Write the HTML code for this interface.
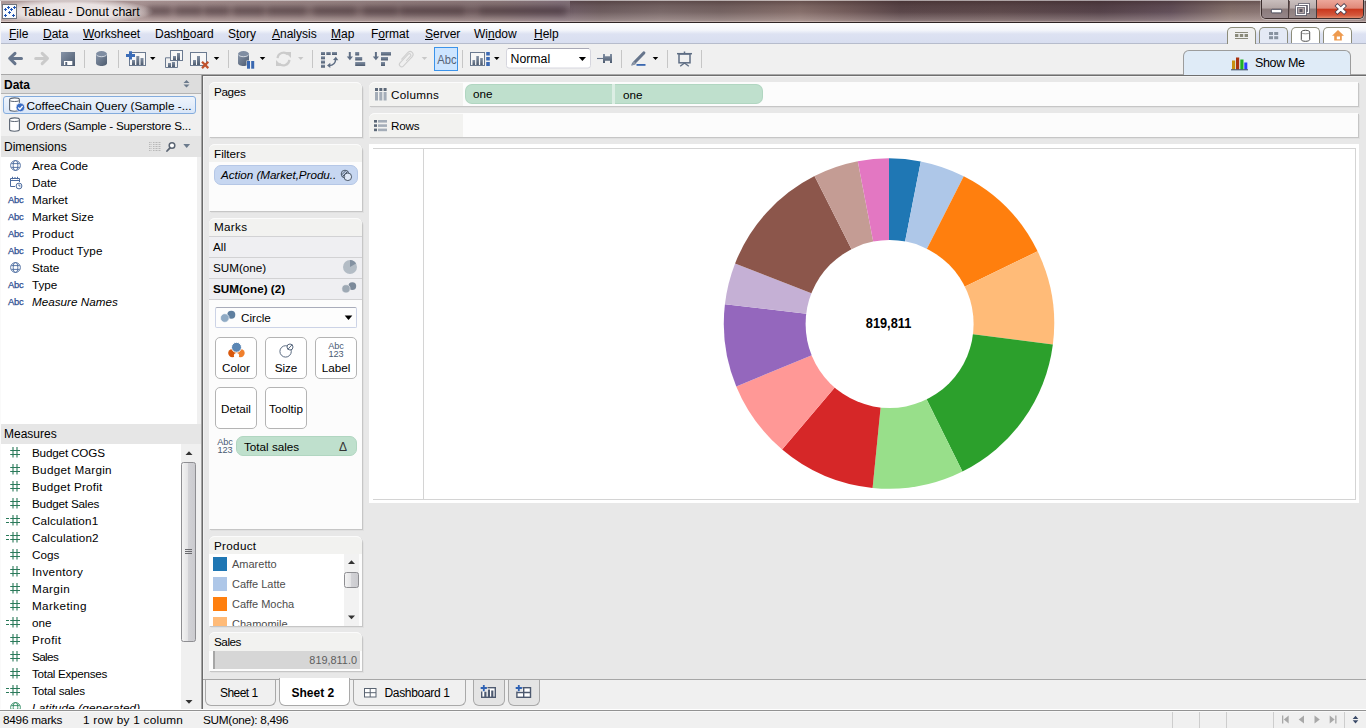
<!DOCTYPE html>
<html><head><meta charset="utf-8"><title>Tableau - Donut chart</title>
<style>
*{box-sizing:border-box;margin:0;padding:0}
html,body{width:1366px;height:728px;overflow:hidden;background:#e8e8e8}
body{font-family:"Liberation Sans",sans-serif;font-size:12px;color:#000;position:relative}
.a{position:absolute}
.t{position:absolute;white-space:nowrap;line-height:16px;height:16px}
u{text-decoration:underline;text-underline-offset:1px}
/* title */
#title{left:0;top:0;width:1366px;height:23px;background:#6e5a5a}
#menubar{left:0;top:23px;width:1366px;height:21px;background:linear-gradient(#fff 0,#f4f6fb 35%,#dde2f2 55%,#d8def0 100%);border-bottom:1px solid #b6bccc}
#toolbar{left:0;top:44px;width:1366px;height:31px;background:#f0f0f0}
.sep{position:absolute;top:50px;width:1px;height:18px;background:#c4c4c4}
.card{position:absolute;background:#fcfcfc;border-radius:6px 6px 0 0;box-shadow:1px 1px 0 #c6c6c6,2px 2px 0 #e0e0e0}
.card .h{position:absolute;left:0;top:0;right:0;height:17px;background:#f2f2f0;border-radius:6px 6px 0 0;border-top:1px solid #fbfbfb}
.li{position:absolute;left:32px;white-space:nowrap;line-height:16px;height:16px}
</style></head><body>
<!--TITLE-->
<div id="title" class="a" style="overflow:hidden;background:linear-gradient(90deg,#a38e8e 0,#a08a8a 100px,#9c8686 150px,#937d7d 220px,#8a7575 320px,#806b6c 420px,#7a6668 500px,#72606a 560px,#6f5e60 600px,#7b6a6a 660px,#766463 720px,#87706c 800px,#735c5b 850px,#5b474a 900px,#5e4a4c 1000px,#56434a 1100px,#63505a 1170px,#88746f 1230px,#8a7674 1260px,#7a6666 1366px)">
<div class="a" style="left:0;top:0;width:570px;height:23px;background:linear-gradient(180deg,rgba(255,255,255,.5) 0,rgba(255,255,255,.5) 1px,rgba(255,245,245,.1) 1px,rgba(255,245,245,.08) 5px,rgba(0,0,0,0) 11px,rgba(255,240,235,.2) 18px,rgba(255,240,235,.3) 21px,rgba(255,240,235,.55) 21px,rgba(255,240,235,.55) 22px,rgba(40,30,30,.9) 22px,rgba(40,30,30,.9) 23px)"></div>
<div class="a" style="left:570px;top:0;width:796px;height:23px;background:linear-gradient(180deg,rgba(255,255,255,.5) 0,rgba(255,255,255,.5) 1px,rgba(40,20,20,.35) 1px,rgba(40,20,20,.12) 6px,rgba(0,0,0,0) 12px,rgba(255,240,235,.22) 19px,rgba(255,240,235,.3) 21px,rgba(255,240,235,.5) 21px,rgba(255,240,235,.5) 22px,rgba(40,30,30,.9) 22px,rgba(40,30,30,.9) 23px)"></div>
<div class="a" style="left:146px;top:6px;width:424px;height:10px;background:linear-gradient(90deg,rgba(50,32,38,0) 0,rgba(50,32,38,.2) 1px,rgba(50,32,38,.4) 5px,rgba(50,32,38,.4) 22px,rgba(50,32,38,.2) 26px,rgba(50,32,38,.2) 28px,rgba(50,32,38,.4) 32px,rgba(50,32,38,.4) 53px,rgba(50,32,38,.2) 57px,rgba(50,32,38,.2) 57px,rgba(50,32,38,.4) 61px,rgba(50,32,38,.4) 80px,rgba(50,32,38,.2) 84px,rgba(50,32,38,.2) 86px,rgba(50,32,38,.4) 90px,rgba(50,32,38,.4) 116px,rgba(50,32,38,.2) 120px,rgba(50,32,38,.2) 120px,rgba(50,32,38,.4) 124px,rgba(50,32,38,.4) 157px,rgba(50,32,38,.2) 161px,rgba(50,32,38,.2) 166px,rgba(50,32,38,.4) 170px,rgba(50,32,38,.4) 207px,rgba(50,32,38,.2) 211px,rgba(50,32,38,.2) 216px,rgba(50,32,38,.4) 220px,rgba(50,32,38,.4) 249px,rgba(50,32,38,.2) 253px,rgba(50,32,38,.2) 253px,rgba(50,32,38,.4) 257px,rgba(50,32,38,.4) 316px,rgba(50,32,38,.2) 320px,rgba(50,32,38,.2) 332px,rgba(50,32,38,.4) 336px,rgba(50,32,38,.4) 416px,rgba(50,32,38,.2) 420px,rgba(50,32,38,0) 424px);filter:blur(2.400px)"></div>
<div class="a" style="left:0;top:1px;width:170px;height:20px;background:radial-gradient(ellipse 84px 13px at 70px 10.500px,rgba(255,252,252,.82) 0,rgba(255,252,252,.75) 60%,rgba(255,252,252,.4) 82%,rgba(255,252,252,0) 100%)"></div>
<svg class="a" style="left:2px;top:4px" width="15" height="15" viewBox="0 0 15 15"><rect x=".5" y=".5" width="14" height="14" fill="#fafbfd" stroke="#6f747c"/><path d="M2.0 5.5h3M3.5 4.0v3M5.0 3.5h3M6.5 2.0v3M8.0 5.5h3M9.5 4.0v3M11.0 3.5h3M12.5 2.0v3M6.0 8.5h3M7.5 7.0v3M2.0 11.5h3M3.5 10.0v3M10.0 11.5h3M11.5 10.0v3" stroke="#1f55b5" stroke-width="1" fill="none"/></svg>
<div class="t" style="left:22px;top:4px;font-size:12.300px">Tableau - Donut chart</div>
<!-- window controls -->
<div class="a" style="left:1261px;top:0;width:103px;height:19px;border:1px solid #3a2c2c;border-top:none;border-radius:0 0 5px 5px;overflow:hidden;box-shadow:0 0 0 1px rgba(255,255,255,.35)">
 <div class="a" style="left:0;top:0;width:27px;height:18px;background:linear-gradient(#c9bebd 0,#b4a7a6 45%,#8a7a7a 50%,#95868a 100%);border-right:1px solid #4a3c3c"></div>
 <div class="a" style="left:28px;top:0;width:27px;height:18px;background:linear-gradient(#cbc1c0 0,#b7abaa 45%,#8d7e7e 50%,#998b8b 100%);border-right:1px solid #4a3c3c"></div>
 <div class="a" style="left:55px;top:0;width:47px;height:18px;background:linear-gradient(#eca79a 0,#e08878 45%,#c9381e 52%,#d4583c 85%,#e08a6c 100%)"></div>
 <svg class="a" style="left:0;top:0" width="102" height="18" viewBox="0 0 102 18"><rect x="9.300" y="9.300" width="10.400" height="3.600" rx=".8" fill="#fff" stroke="#4a4a5a" stroke-width="1"/><rect x="37.500" y="4.500" width="9" height="8" fill="none" stroke="#4a4a5a" stroke-width="2.600"/><rect x="37.500" y="4.500" width="9" height="8" fill="none" stroke="#fff" stroke-width="1.300"/><rect x="34.500" y="6.500" width="9" height="8" fill="#b0a4a4" stroke="#4a4a5a" stroke-width="2.600"/><rect x="34.500" y="6.500" width="9" height="8" fill="none" stroke="#fff" stroke-width="1.300"/><rect x="37.500" y="9" width="3" height="3" fill="#5a5560"/><path d="M75.500 6l6.500 6M82 6l-6.500 6" stroke="#4a4050" stroke-width="4.200" stroke-linecap="square"/><path d="M75.500 6l6.500 6M82 6l-6.500 6" stroke="#fff" stroke-width="2.600" stroke-linecap="square"/></svg>
</div>
</div>
<!--MENU-->
<div id="menubar" class="a">
<div class="t" style="left:9px;top:3px"><u>F</u>ile</div>
<div class="t" style="left:43px;top:3px"><u>D</u>ata</div>
<div class="t" style="left:83px;top:3px"><u>W</u>orksheet</div>
<div class="t" style="left:155px;top:3px">Dash<u>b</u>oard</div>
<div class="t" style="left:228px;top:3px">S<u>t</u>ory</div>
<div class="t" style="left:272px;top:3px"><u>A</u>nalysis</div>
<div class="t" style="left:331px;top:3px"><u>M</u>ap</div>
<div class="t" style="left:371px;top:3px">F<u>o</u>rmat</div>
<div class="t" style="left:425px;top:3px"><u>S</u>erver</div>
<div class="t" style="left:474px;top:3px">Wi<u>n</u>dow</div>
<div class="t" style="left:534px;top:3px"><u>H</u>elp</div>
</div>
<!--TOOLBAR-->
<div id="toolbar" class="a">
<svg class="a" style="left:0;top:0" width="720" height="31" viewBox="0 44 720 31">
<defs>
<linearGradient id="sl" x1="0" y1="0" x2="0" y2="1"><stop offset="0" stop-color="#8290a4"/><stop offset="1" stop-color="#4e5c70"/></linearGradient>
<linearGradient id="sl2" x1="0" y1="0" x2="1" y2="1"><stop offset="0" stop-color="#8794a8"/><stop offset="1" stop-color="#4c5a6e"/></linearGradient>
</defs>
<g fill="#c6c6c6"><rect x="84" y="50" width="1" height="18"/><rect x="118" y="50" width="1" height="18"/><rect x="228" y="50" width="1" height="18"/><rect x="312" y="50" width="1" height="18"/><rect x="462" y="50" width="1" height="18"/><rect x="621" y="50" width="1" height="18"/><rect x="667" y="50" width="1" height="18"/><rect x="701" y="50" width="1" height="18"/></g>
<!-- back / forward -->
<path d="M21.500 58.400H10M15 53.300L9.700 58.400L15 63.600" fill="none" stroke="#66758c" stroke-width="3" stroke-linecap="round" stroke-linejoin="round"/>
<path d="M35.700 58.400H47M42.200 53.300L47.500 58.400L42.200 63.600" fill="none" stroke="#cacaca" stroke-width="3" stroke-linecap="round" stroke-linejoin="round"/>
<!-- save -->
<rect x="61" y="52" width="14" height="14" fill="url(#sl2)"/><rect x="64" y="61" width="8.300" height="4" fill="#fff"/><rect x="65.300" y="62" width="1.900" height="3" fill="#56647a"/>
<!-- cylinder -->
<path d="M96 54v9.200c0 1.600 2.500 2.800 5.500 2.800s5.500-1.200 5.500-2.800V54z" fill="url(#sl2)"/><ellipse cx="101.500" cy="54" rx="5.500" ry="3" fill="#7f8da2"/><path d="M96.400 54.800c.8 1.200 2.800 1.900 5.100 1.900s4.300-.7 5.100-1.900" fill="none" stroke="#dfe3ea" stroke-width=".9"/>
<!-- new worksheet -->
<rect x="129.500" y="52.500" width="16" height="13" fill="#f7f7f7" stroke="#6b7a90"/><rect x="132" y="60" width="3" height="5" fill="url(#sl)"/><rect x="136.300" y="56" width="3" height="9" fill="url(#sl)"/><rect x="140.500" y="58" width="3" height="7" fill="url(#sl)"/>
<path d="M126 54h9v3h-9zM129 51.200h3v8.300h-3z" fill="#3c6db8"/>
<path d="M150 57h5.500l-2.750 3z" fill="#000"/>
<!-- duplicate -->
<rect x="170.500" y="50.500" width="12" height="10" fill="#f7f7f7" stroke="#6b7a90"/><rect x="173" y="56" width="3" height="4" fill="url(#sl)"/><rect x="177" y="53" width="3" height="7" fill="url(#sl)"/>
<path d="M170 57.800h-4.500v9.700h12v-7" fill="none" stroke="#6b7a90"/><rect x="168" y="63" width="3" height="4" fill="url(#sl)"/><rect x="172" y="62" width="3" height="5" fill="url(#sl)"/>
<!-- clear -->
<rect x="190.500" y="52.500" width="16" height="13" fill="#f7f7f7" stroke="#6b7a90"/><rect x="193" y="60" width="3" height="5" fill="url(#sl)"/><rect x="197" y="56" width="3" height="9" fill="url(#sl)"/>
<path d="M202 61.800l6.300 6.300M208.300 61.800l-6.300 6.300" stroke="#c0522d" stroke-width="2.200"/>
<path d="M213.800 57h5.500l-2.750 3z" fill="#000"/>
<!-- db pause -->
<path d="M238 54v9.200c0 1.600 2.500 2.800 5.500 2.800s5.500-1.200 5.500-2.800V54z" fill="url(#sl2)"/><ellipse cx="243.500" cy="54" rx="5.500" ry="3" fill="#7f8da2"/><path d="M238.400 54.800c.8 1.200 2.800 1.900 5.100 1.900s4.300-.7 5.100-1.900" fill="none" stroke="#dfe3ea" stroke-width=".9"/>
<rect x="246.500" y="60.500" width="8" height="8.500" fill="#f0f0f0"/><rect x="247" y="61" width="3" height="7.700" fill="#3a68b0"/><rect x="251.200" y="61" width="3" height="7.700" fill="#3a68b0"/>
<path d="M259.800 57h5.500l-2.750 3z" fill="#000"/>
<!-- refresh disabled -->
<g fill="none" stroke="#cbcbcb" stroke-width="2.300"><path d="M277.600 58.200a6 6 0 0 1 10.300-3.700"/><path d="M289.400 59.800a6 6 0 0 1-10.300 3.700"/></g><path d="M285 52h6v6z" fill="#cbcbcb"/><path d="M282 66h-6v-6z" fill="#cbcbcb"/>
<path d="M298 57h5.500l-2.750 3z" fill="#c8c8c8"/>
<!-- swap -->
<g fill="url(#sl)"><rect x="321" y="52" width="4" height="3"/><rect x="326.300" y="52" width="4.400" height="3"/><rect x="332" y="52" width="5" height="3"/><rect x="321" y="56.300" width="4" height="3"/><rect x="321" y="60.500" width="4" height="3"/><rect x="321" y="64.700" width="4" height="3"/></g>
<path d="M329 65.500c4.500 0 6.500-2.500 6.700-6.500" fill="none" stroke="#5f6e84" stroke-width="1.500"/><path d="M333 60l2.800-3.200 2.600 3.400z" fill="#5f6e84"/><path d="M330.300 62.800l-3.300 2.700 3.300 2.600z" fill="#5f6e84"/>
<!-- sort asc -->
<path d="M349.800 52v6" stroke="#5f6e84" stroke-width="2"/><path d="M346.800 56.500h6.200l-3.100 3.700z" fill="#5f6e84"/>
<g fill="url(#sl)"><rect x="355.200" y="52" width="4" height="3.500"/><rect x="355.200" y="57" width="7" height="3.500"/><rect x="355.200" y="62" width="10" height="4"/></g>
<!-- sort desc -->
<path d="M375.900 52v6" stroke="#5f6e84" stroke-width="2"/><path d="M372.800 56.500h6.200l-3.100 3.700z" fill="#5f6e84"/>
<g fill="url(#sl)"><rect x="381" y="52" width="10" height="3.500"/><rect x="381" y="57" width="7" height="3.500"/><rect x="381" y="62" width="4" height="4"/></g>
<!-- paperclip disabled -->
<g fill="none" stroke="#cfcfcf" stroke-width="1.100" stroke-linecap="round"><path d="M406.500 60.500l4-4.300a1.500 1.500 0 0 0-2.200-2.100l-8.300 8.800a2.300 2.300 0 0 0 3.300 3.200l9.200-9.800a3 3 0 0 0-4.300-4.100l-6.500 6.900"/></g>
<path d="M421.700 57h5.500l-2.750 3z" fill="#c8c8c8"/>
<!-- Abc -->
<rect x="434.500" y="47.500" width="23" height="23" fill="#cde5ff" stroke="#3b93ea"/>
<text x="437.300" y="63.800" font-family="Liberation Sans, sans-serif" font-size="12.800" fill="#566478" textLength="19.200" lengthAdjust="spacingAndGlyphs">Abc</text>
<!-- chart type -->
<rect x="470.500" y="52.500" width="14" height="13" fill="#f7f7f7" stroke="#6b7a90"/><rect x="472.500" y="60" width="2.600" height="5" fill="url(#sl)"/><rect x="476.300" y="56" width="2.600" height="9" fill="url(#sl)"/><rect x="480.200" y="58" width="2.600" height="7" fill="url(#sl)"/>
<g fill="#3c6ab4"><rect x="486.200" y="52" width="3.600" height="3.500"/><rect x="486.200" y="57" width="3.600" height="3.500"/><rect x="486.200" y="62" width="3.600" height="4"/></g>
<path d="M494 57h5.500l-2.750 3z" fill="#000"/>
<!-- normal select -->
<rect x="506.500" y="48.500" width="84" height="19.500" rx="2.500" fill="#fff" stroke="#d6d6de"/><path d="M508 48.500h81" stroke="#a9a9b6"/>
<path d="M578.800 57h7.200l-3.600 4z" fill="#000"/>
<!-- pin -->
<path d="M597 58.500h6" stroke="#66758c" stroke-width="1.100"/><path d="M603 54h2v2.300h5V54h2v9h-2v-2.300h-5V63h-2z" fill="url(#sl)"/>
<!-- pen -->
<path d="M634.500 62.500l9.300-9.500" stroke="#66758c" stroke-width="3.200" stroke-linecap="round"/><path d="M631.300 65.600l1-3.400 2.600 2.500z" fill="#66758c"/><path d="M631.300 65.600l2.500-4.300 2.800 2.700z" fill="#8d98a8"/><rect x="636.500" y="64" width="9" height="1.800" fill="#3a68b0"/>
<path d="M652.700 57h5.500l-2.750 3z" fill="#000"/>
<!-- presentation -->
<g fill="none" stroke="#5f6e84"><path d="M677 53.700h15" stroke-width="1.500"/><path d="M684.500 51.500v2" stroke-width="1.500"/><rect x="679" y="54" width="11" height="8.800" stroke-width="1.500"/><path d="M684.500 63l-4.300 3.300M684.500 63l4.300 3.300" stroke-width="1.400"/></g>
</svg>
<div class="t" style="left:510.500px;top:7px;font-size:12.300px;line-height:16px">Normal</div>
</div>
<div class="a" style="left:0;top:74px;width:1366px;height:1px;background:#a8a8a8"></div>
<div class="a" style="left:202px;top:75px;width:1164px;height:1px;background:#6e6e6e"></div>
<div class="a" style="left:203px;top:76px;width:1163px;height:1px;background:#f4f4f4"></div>
<div class="a" style="left:201px;top:75px;width:1px;height:634px;background:#a4a4a4"></div>
<div class="a" style="left:202px;top:75px;width:1px;height:634px;background:#6a6a6a"></div>
<div class="a" style="left:203px;top:76px;width:1px;height:633px;background:#f2f2f2"></div>
<div id="left" class="a" style="left:0;top:75px;width:201px;height:634px;background:#f0f0f0;overflow:hidden;font-size:11.700px">
<div class="a" style="left:0;top:0;width:1px;height:634px;background:#fafafa"></div>
<div class="a" style="left:1px;top:0;width:200px;height:19px;background:#dddddd;border-bottom:1px solid #b4b4b4"></div>
<div class="t" style="left:4px;top:2px;font-weight:bold;font-size:12px">Data</div>
<svg class="a" style="left:183px;top:5px" width="7" height="8" viewBox="0 0 7 8" fill="#6b7a8c"><path d="M.5 3L3.500 0l3 3zM.5 4.500h6l-3 3z"/></svg>
<div class="a" style="left:1px;top:19px;width:200px;height:42px;background:#f0f0f0"></div>
<div class="a" style="left:3px;top:21px;width:193px;height:18px;border:1px solid #84acdd;border-radius:3px;background:linear-gradient(#eef4fc,#d9e6f8)"></div>
<svg class="a" style="left:9px;top:22px" width="18" height="16" viewBox="0 0 18 16"><path d="M.6 2.600v10c0 1 2.200 1.700 4.900 1.700s4.900-.7 4.900-1.700v-10c0-1-2.200-1.700-4.900-1.700S.6 1.600.6 2.600z" fill="#fff" stroke="#5a6472" stroke-width="1.100"/><path d="M1.200 3.900c1 .4 2.500.6 4.300.6s3.300-.2 4.300-.6" fill="none" stroke="#5a6472" stroke-width="1"/><circle cx="11.400" cy="10.400" r="4.300" fill="#3a6cc4" stroke="#e6eefa" stroke-width=".7"/><path d="M9.300 10.500l1.600 1.700 2.700-3.200" fill="none" stroke="#fff" stroke-width="1.300"/></svg>
<div class="t" style="left:26.500px;top:23px;font-size:11.800px">CoffeeChain Query (Sample -...</div>
<svg class="a" style="left:9px;top:42px" width="18" height="16" viewBox="0 0 18 16"><path d="M.6 2.600v10c0 1 2.200 1.700 4.900 1.700s4.900-.7 4.900-1.700v-10c0-1-2.200-1.700-4.900-1.700S.6 1.600.6 2.600z" fill="#fff" stroke="#5a6472" stroke-width="1.100"/><path d="M1.200 3.900c1 .4 2.500.6 4.300.6s3.300-.2 4.300-.6" fill="none" stroke="#5a6472" stroke-width="1"/></svg>
<div class="t" style="left:26.500px;top:43px;font-size:11.700px;letter-spacing:-.2px">Orders (Sample - Superstore S...</div>
<div class="a" style="left:1px;top:61px;width:200px;height:21px;background:#e4e4e4"></div>
<div class="t" style="left:4px;top:64px;font-size:12px">Dimensions</div>
<svg class="a" style="left:148px;top:66px" width="46" height="12" viewBox="0 0 46 12"><g stroke="#b8b8b8" stroke-width="1"><path d="M1 1.500h3M5 1.500h8M1 3.500h3M5 3.500h8M1 5.500h3M5 5.500h8M1 7.500h3M5 7.500h8M1 9.500h3M5 9.500h8" stroke-dasharray="1 .5"/></g><circle cx="24" cy="4.500" r="2.800" fill="#fff" stroke="#5a6472" stroke-width="1.500"/><path d="M22 6.800l-3 3.200" stroke="#5a6472" stroke-width="1.800" stroke-linecap="round"/><path d="M35.300 3h6.800l-3.400 4z" fill="#6b7a8c"/></svg>
<div class="a" style="left:1px;top:82px;width:196px;height:267px;background:#fff"></div>
<svg class="a" style="left:10px;top:85px" width="11" height="11" viewBox="0 0 11 11" fill="none" stroke="#4a6a9e" stroke-width=".9"><circle cx="5.500" cy="5.500" r="4.900"/><ellipse cx="5.500" cy="5.500" rx="2.300" ry="4.900"/><path d="M1.300 3.600h8.400M1.300 7.400h8.400"/></svg>
<div class="li" style="top:83px">Area Code</div>
<svg class="a" style="left:9px;top:101px" width="14" height="14" viewBox="0 0 14 14" fill="none" stroke="#4a6a9e" stroke-width="1"><path d="M6 10.500H1.500V2.500h9V6M1.500 4.500h9M3.500 .8v2.400M8.500 .8v2.400M5.500 1.500h1"/><circle cx="10" cy="10" r="2.900"/><path d="M10 8.300V10h1.500"/></svg>
<div class="li" style="top:100px">Date</div>
<div class="t" style="left:8px;top:117px;font-size:9.400px;color:#2f4f92;letter-spacing:-.25px;-webkit-text-stroke:.25px #2f4f92">Abc</div>
<div class="li" style="top:117px">Market</div>
<div class="t" style="left:8px;top:134px;font-size:9.400px;color:#2f4f92;letter-spacing:-.25px;-webkit-text-stroke:.25px #2f4f92">Abc</div>
<div class="li" style="top:134px">Market Size</div>
<div class="t" style="left:8px;top:151px;font-size:9.400px;color:#2f4f92;letter-spacing:-.25px;-webkit-text-stroke:.25px #2f4f92">Abc</div>
<div class="li" style="top:151px;letter-spacing:0.257px">Product</div>
<div class="t" style="left:8px;top:168px;font-size:9.400px;color:#2f4f92;letter-spacing:-.25px;-webkit-text-stroke:.25px #2f4f92">Abc</div>
<div class="li" style="top:168px;letter-spacing:0.158px">Product Type</div>
<svg class="a" style="left:10px;top:187px" width="11" height="11" viewBox="0 0 11 11" fill="none" stroke="#4a6a9e" stroke-width=".9"><circle cx="5.500" cy="5.500" r="4.900"/><ellipse cx="5.500" cy="5.500" rx="2.300" ry="4.900"/><path d="M1.300 3.600h8.400M1.300 7.400h8.400"/></svg>
<div class="li" style="top:185px">State</div>
<div class="t" style="left:8px;top:202px;font-size:9.400px;color:#2f4f92;letter-spacing:-.25px;-webkit-text-stroke:.25px #2f4f92">Abc</div>
<div class="li" style="top:202px">Type</div>
<div class="t" style="left:8px;top:219px;font-size:9.400px;color:#2f4f92;letter-spacing:-.25px;-webkit-text-stroke:.25px #2f4f92">Abc</div>
<div class="li" style="top:219px;font-style:italic">Measure Names</div>
<div class="a" style="left:1px;top:349px;width:200px;height:20px;background:#e6e6e6"></div>
<div class="t" style="left:4px;top:351px;font-size:12px">Measures</div>
<div class="a" style="left:1px;top:369px;width:180px;height:265px;background:#fff"></div>
<svg class="a" style="left:5px;top:372px" width="16" height="11" viewBox="0 0 16 11" stroke="#2a7a5a" stroke-width="1.100" fill="none"><path d="M8 0v10.500M12 0v10.500M5.200 3.500h9.800M5.200 7.500h9.800"/></svg>
<div class="li" style="top:370px;letter-spacing:-0.173px">Budget COGS</div>
<svg class="a" style="left:5px;top:389px" width="16" height="11" viewBox="0 0 16 11" stroke="#2a7a5a" stroke-width="1.100" fill="none"><path d="M8 0v10.500M12 0v10.500M5.200 3.500h9.800M5.200 7.500h9.800"/></svg>
<div class="li" style="top:387px;letter-spacing:0.3px">Budget Margin</div>
<svg class="a" style="left:5px;top:406px" width="16" height="11" viewBox="0 0 16 11" stroke="#2a7a5a" stroke-width="1.100" fill="none"><path d="M8 0v10.500M12 0v10.500M5.200 3.500h9.800M5.200 7.500h9.800"/></svg>
<div class="li" style="top:404px;letter-spacing:0.231px">Budget Profit</div>
<svg class="a" style="left:5px;top:423px" width="16" height="11" viewBox="0 0 16 11" stroke="#2a7a5a" stroke-width="1.100" fill="none"><path d="M8 0v10.500M12 0v10.500M5.200 3.500h9.800M5.200 7.500h9.800"/></svg>
<div class="li" style="top:421px;letter-spacing:-0.2px">Budget Sales</div>
<svg class="a" style="left:5px;top:440px" width="16" height="11" viewBox="0 0 16 11" stroke="#2a7a5a" stroke-width="1.100" fill="none"><path d="M8 0v10.500M12 0v10.500M5.200 3.500h9.800M5.200 7.500h9.800"/><path d="M1 3.500h3M1 7.500h3" stroke-width="1.100"/></svg>
<div class="li" style="top:438px;letter-spacing:0.167px">Calculation1</div>
<svg class="a" style="left:5px;top:457px" width="16" height="11" viewBox="0 0 16 11" stroke="#2a7a5a" stroke-width="1.100" fill="none"><path d="M8 0v10.500M12 0v10.500M5.200 3.500h9.800M5.200 7.500h9.800"/><path d="M1 3.500h3M1 7.500h3" stroke-width="1.100"/></svg>
<div class="li" style="top:455px;letter-spacing:0.208px">Calculation2</div>
<svg class="a" style="left:5px;top:474px" width="16" height="11" viewBox="0 0 16 11" stroke="#2a7a5a" stroke-width="1.100" fill="none"><path d="M8 0v10.500M12 0v10.500M5.200 3.500h9.800M5.200 7.500h9.800"/></svg>
<div class="li" style="top:472px">Cogs</div>
<svg class="a" style="left:5px;top:491px" width="16" height="11" viewBox="0 0 16 11" stroke="#2a7a5a" stroke-width="1.100" fill="none"><path d="M8 0v10.500M12 0v10.500M5.200 3.500h9.800M5.200 7.500h9.800"/></svg>
<div class="li" style="top:489px;letter-spacing:0.333px">Inventory</div>
<svg class="a" style="left:5px;top:508px" width="16" height="11" viewBox="0 0 16 11" stroke="#2a7a5a" stroke-width="1.100" fill="none"><path d="M8 0v10.500M12 0v10.500M5.200 3.500h9.800M5.200 7.500h9.800"/></svg>
<div class="li" style="top:506px;letter-spacing:0.4px">Margin</div>
<svg class="a" style="left:5px;top:525px" width="16" height="11" viewBox="0 0 16 11" stroke="#2a7a5a" stroke-width="1.100" fill="none"><path d="M8 0v10.500M12 0v10.500M5.200 3.500h9.800M5.200 7.500h9.800"/></svg>
<div class="li" style="top:523px;letter-spacing:0.389px">Marketing</div>
<svg class="a" style="left:5px;top:542px" width="16" height="11" viewBox="0 0 16 11" stroke="#2a7a5a" stroke-width="1.100" fill="none"><path d="M8 0v10.500M12 0v10.500M5.200 3.500h9.800M5.200 7.500h9.800"/><path d="M1 3.500h3M1 7.500h3" stroke-width="1.100"/></svg>
<div class="li" style="top:540px">one</div>
<svg class="a" style="left:5px;top:559px" width="16" height="11" viewBox="0 0 16 11" stroke="#2a7a5a" stroke-width="1.100" fill="none"><path d="M8 0v10.500M12 0v10.500M5.200 3.500h9.800M5.200 7.500h9.800"/></svg>
<div class="li" style="top:557px;letter-spacing:0.333px">Profit</div>
<svg class="a" style="left:5px;top:576px" width="16" height="11" viewBox="0 0 16 11" stroke="#2a7a5a" stroke-width="1.100" fill="none"><path d="M8 0v10.500M12 0v10.500M5.200 3.500h9.800M5.200 7.500h9.800"/></svg>
<div class="li" style="top:574px;letter-spacing:-0.6px">Sales</div>
<svg class="a" style="left:5px;top:593px" width="16" height="11" viewBox="0 0 16 11" stroke="#2a7a5a" stroke-width="1.100" fill="none"><path d="M8 0v10.500M12 0v10.500M5.200 3.500h9.800M5.200 7.500h9.800"/></svg>
<div class="li" style="top:591px;letter-spacing:-0.307px">Total Expenses</div>
<svg class="a" style="left:5px;top:610px" width="16" height="11" viewBox="0 0 16 11" stroke="#2a7a5a" stroke-width="1.100" fill="none"><path d="M8 0v10.500M12 0v10.500M5.200 3.500h9.800M5.200 7.500h9.800"/><path d="M1 3.500h3M1 7.500h3" stroke-width="1.100"/></svg>
<div class="li" style="top:608px;letter-spacing:-0.209px">Total sales</div>
<svg class="a" style="left:10px;top:627px" width="11" height="11" viewBox="0 0 11 11" fill="none" stroke="#2f8a62" stroke-width=".9"><circle cx="5.500" cy="5.500" r="4.900"/><ellipse cx="5.500" cy="5.500" rx="2.300" ry="4.900"/><path d="M1.300 3.600h8.400M1.300 7.400h8.400"/></svg>
<div class="li" style="top:625px;font-style:italic;letter-spacing:0.15px">Latitude (generated)</div>
<div class="a" style="left:181px;top:369px;width:15px;height:265px;background:#f0f0f0"></div>
<svg class="a" style="left:181px;top:369px" width="15" height="265" viewBox="0 0 15 265"><path d="M4.500 11l3.500-3.800 3.500 3.800z" fill="#333"/><path d="M4.500 256l3.500 3.800 3.500-3.800z" fill="#333"/><defs><linearGradient id="th" x1="0" y1="0" x2="1" y2="0"><stop offset="0" stop-color="#f4f4f4"/><stop offset=".45" stop-color="#e4e4e6"/><stop offset=".5" stop-color="#d2d2d6"/><stop offset="1" stop-color="#cacace"/></linearGradient></defs><rect x=".5" y="18.500" width="14" height="179" rx="2" fill="url(#th)" stroke="#8e8e92"/><path d="M4 105.500h7M4 107.500h7M4 109.500h7" stroke="#6a6a6e" stroke-width="1"/></svg>
</div>
<div class="card" style="left:209px;top:82px;width:153px;height:55px"><div class="h" style="height:18px"></div><div class="t" style="left:5px;top:2px;font-size:11.700px;letter-spacing:-0.35px">Pages</div></div>
<div class="card" style="left:209px;top:144px;width:153px;height:67px"><div class="h" style="height:18px"></div><div class="t" style="left:5px;top:2px;font-size:11.700px;letter-spacing:0px">Filters</div><div class="a" style="left:5px;top:21px;width:144px;height:20px;border-radius:7px;background:#c7d7f1;border:1px solid #b5c7e6"></div><div class="t" style="left:12px;top:23px;font-style:italic;font-size:11.700px;letter-spacing:-.05px">Action (Market,Produ..</div><svg class="a" style="left:131px;top:25px" width="13" height="13" viewBox="0 0 13 13" fill="none" stroke="#4e5a6a" stroke-width="1"><circle cx="5" cy="5" r="3.800"/><circle cx="7.800" cy="7.800" r="3.800" fill="#dfe8f6"/><path d="M2.400 7.600L7.600 2.400M3.800 8.600l1-1M1.500 6l4.500-4.500"/></svg></div>
<div class="card" style="left:209px;top:218px;width:153px;height:311px"><div class="h" style="height:18px"></div><div class="t" style="left:5px;top:1px;font-size:11.700px;letter-spacing:0.3px">Marks</div><div class="a" style="left:0;top:18px;width:153px;height:63px;background:#efeff2"></div><div class="a" style="left:0;top:18px;width:153px;height:1px;background:#d2d2d4"></div><div class="a" style="left:0;top:39px;width:153px;height:1px;background:#d2d2d4"></div><div class="a" style="left:0;top:60px;width:153px;height:1px;background:#d2d2d4"></div><div class="a" style="left:0;top:81px;width:153px;height:1px;background:#d2d2d4"></div><div class="t" style="left:4px;top:21px;font-size:11.700px">All</div><div class="t" style="left:4px;top:42px;font-size:11.700px">SUM(one)</div><div class="t" style="left:4px;top:63px;font-size:11.700px;font-weight:bold">SUM(one) (2)</div><svg class="a" style="left:133px;top:41px" width="16" height="16" viewBox="0 0 16 16"><circle cx="8" cy="8" r="7" fill="#b3bcc5"/><path d="M8 8V1a7 7 0 0 1 6.060 3.500z" fill="#8391a1"/></svg><svg class="a" style="left:132px;top:63px" width="18" height="14" viewBox="0 0 18 14"><circle cx="11.300" cy="5.100" r="3.900" fill="#7c8a9a"/><circle cx="5" cy="7.800" r="4.100" fill="#9ea9b4" stroke="#efeff2" stroke-width=".6"/></svg><div class="a" style="left:6px;top:89px;width:142px;height:21px;background:#fdfdfd;border:1px solid #ccd3e6;border-top-color:#a9acba;border-radius:2px"></div><svg class="a" style="left:10px;top:91px" width="18" height="16" viewBox="0 0 18 16"><circle cx="12.300" cy="5.800" r="4" fill="#5f7f9f"/><circle cx="5.800" cy="9" r="4.300" fill="#8faac4" stroke="#fdfdfd" stroke-width=".6"/></svg><div class="t" style="left:32px;top:92px;font-size:11.700px">Circle</div><svg class="a" style="left:135px;top:97px" width="9" height="5" viewBox="0 0 9 5"><path d="M.7 .6h7.600L4.500 4.900z" fill="#000"/></svg><div class="a" style="left:6px;top:119px;width:42px;height:42px;background:#fff;border:1px solid #b4b4b4;border-radius:5px"></div><svg class="a" style="left:18px;top:123px" width="20" height="18" viewBox="0 0 20 18"><circle cx="5.400" cy="12.100" r="4.200" fill="#d9580c"/><circle cx="13.500" cy="12.100" r="4.200" fill="#f07f2c"/><circle cx="9.500" cy="14.600" r="2.600" fill="#fff"/><circle cx="9.500" cy="6.300" r="5" fill="#5a86b4" stroke="#fff" stroke-width="1"/></svg><div class="a" style="left:56px;top:119px;width:42px;height:42px;background:#fff;border:1px solid #b4b4b4;border-radius:5px"></div><svg class="a" style="left:68px;top:122px" width="20" height="20" viewBox="0 0 20 20" fill="none" stroke="#5a6a80" stroke-width="1"><circle cx="8.600" cy="11.400" r="5.700"/><circle cx="13" cy="7" r="3" fill="#fff"/><path d="M11 9.200L15 4.800"/></svg><div class="a" style="left:106px;top:119px;width:42px;height:42px;background:#fff;border:1px solid #b4b4b4;border-radius:5px"></div><div class="a" style="left:117px;top:124px;width:20px;text-align:center;font-size:9.200px;line-height:8px;color:#4a5a74;letter-spacing:-.1px">Abc<br>123</div><div class="a" style="left:6px;top:169px;width:42px;height:42px;background:#fff;border:1px solid #b4b4b4;border-radius:5px"></div><div class="a" style="left:56px;top:169px;width:42px;height:42px;background:#fff;border:1px solid #b4b4b4;border-radius:5px"></div><div class="t" style="left:6px;top:142px;width:42px;text-align:center;font-size:11.700px">Color</div><div class="t" style="left:56px;top:142px;width:42px;text-align:center;font-size:11.700px">Size</div><div class="t" style="left:106px;top:142px;width:42px;text-align:center;font-size:11.700px">Label</div><div class="t" style="left:6px;top:183px;width:42px;text-align:center;font-size:11.700px">Detail</div><div class="t" style="left:56px;top:183px;width:42px;text-align:center;font-size:11.700px">Tooltip</div><div class="a" style="left:6px;top:220px;width:20px;text-align:center;font-size:9.200px;line-height:8px;color:#4a5a74;letter-spacing:-.1px">Abc<br>123</div><div class="a" style="left:27px;top:218px;width:121px;height:20px;border-radius:7px;background:#bfe0cd;border:1px solid #b1d6c1"></div><div class="t" style="left:35px;top:221px;font-size:11.700px">Total sales</div><div class="t" style="left:130px;top:221px;font-size:12px;color:#333">Δ</div></div>
<div class="card" style="left:209px;top:536px;width:153px;height:90px"><div class="h" style="height:18px"></div><div class="t" style="left:5px;top:2px;font-size:11.700px;letter-spacing:0.3px">Product</div><div class="a" style="left:0;top:18px;width:135px;height:72px;background:#fff;overflow:hidden;font-size:11px;color:#4d4d4d"><div class="a" style="left:4px;top:3px;width:14px;height:14px;background:#1f77b4"></div><div class="t" style="left:23px;top:2px">Amaretto</div><div class="a" style="left:4px;top:23px;width:14px;height:14px;background:#aec7e8"></div><div class="t" style="left:23px;top:22px">Caffe Latte</div><div class="a" style="left:4px;top:43px;width:14px;height:14px;background:#ff7f0e"></div><div class="t" style="left:23px;top:42px">Caffe Mocha</div><div class="a" style="left:4px;top:63px;width:14px;height:14px;background:#ffbb78"></div><div class="t" style="left:23px;top:62px">Chamomile</div></div><div class="a" style="left:135px;top:18px;width:15px;height:72px;background:#f2f2f2"></div><svg class="a" style="left:135px;top:18px" width="15" height="72" viewBox="0 0 15 72"><path d="M4 10l3.500-3.800L11 10z" fill="#333"/><path d="M4 61.500l3.500 3.800 3.500-3.800z" fill="#333"/><rect x=".5" y="18.500" width="14" height="15" rx="2" fill="url(#th)" stroke="#8e8e92"/></svg></div>
<div class="card" style="left:209px;top:632px;width:153px;height:39px"><div class="h" style="height:19px"></div><div class="t" style="left:5px;top:2px;font-size:11.700px;letter-spacing:-0.45px">Sales</div><div class="a" style="left:4px;top:19px;width:147px;height:18px;background:#d6d6d6;border-left:2px solid #a6a6a6"></div><div class="t" style="right:5px;top:20px;font-size:10.900px;color:#5e5e5e">819,811.0</div></div>
<div class="a" style="left:369px;top:82px;width:989px;height:24px;background:#fcfcfc;border-radius:6px 0 0 0;box-shadow:1px 1px 0 #c6c6c6,2px 2px 0 #e0e0e0"><div class="a" style="left:0;top:0;width:94px;height:24px;background:#f2f2f0;border-radius:6px 0 0 0;border-top:1px solid #fbfbfb"></div>
<svg class="a" style="left:6px;top:6px" width="12" height="13" viewBox="0 0 12 13"><g fill="#5c6878"><rect x="0" y="0" width="3" height="3"/><rect x="4.300" y="0" width="3" height="3"/><rect x="8.600" y="0" width="3" height="3"/></g><g fill="#a4adb8"><rect x="0" y="4" width="3" height="8.500"/><rect x="4.300" y="4" width="3" height="8.500"/><rect x="8.600" y="4" width="3" height="8.500"/></g></svg>
<div class="t" style="left:22px;top:5px;font-size:11.700px;letter-spacing:.28px">Columns</div>
<div class="a" style="left:243px;top:2px;width:4px;height:20px;background:#dceee4"></div><div class="a" style="left:96px;top:2px;width:147px;height:20px;border-radius:7px 0 0 7px;background:#bfe0cd;border:1px solid #b1d6c1;border-right:none"></div><div class="t" style="left:104px;top:4px;font-size:11.700px">one</div>
<div class="a" style="left:246px;top:2px;width:148px;height:20px;border-radius:0 7px 7px 0;background:#bfe0cd;border:1px solid #b1d6c1;border-left:none"></div><div class="t" style="left:254px;top:5px;font-size:11.700px">one</div>
</div>
<div class="a" style="left:369px;top:113px;width:989px;height:24px;background:#fcfcfc;border-radius:6px 0 0 0;box-shadow:1px 1px 0 #c6c6c6,2px 2px 0 #e0e0e0"><div class="a" style="left:0;top:0;width:94px;height:24px;background:#f2f2f0;border-radius:6px 0 0 0;border-top:1px solid #fbfbfb"></div>
<svg class="a" style="left:5px;top:7px" width="13" height="12" viewBox="0 0 13 12"><g fill="#5c6878"><rect x="0" y="0" width="3" height="2.600"/><rect x="0" y="4.300" width="3" height="2.600"/><rect x="0" y="8.600" width="3" height="2.600"/></g><g fill="#a4adb8"><rect x="4" y="0" width="9" height="2.600"/><rect x="4" y="4.300" width="9" height="2.600"/><rect x="4" y="8.600" width="9" height="2.600"/></g></svg>
<div class="t" style="left:22px;top:5px;font-size:11.700px;letter-spacing:-.2px">Rows</div>
</div>
<div class="a" style="left:369px;top:144px;width:990px;height:359px;background:#fff"></div>
<div class="a" style="left:373px;top:148px;width:983px;height:1px;background:#d4d4d4"></div>
<div class="a" style="left:373px;top:499px;width:983px;height:1px;background:#d4d4d4"></div>
<div class="a" style="left:423px;top:148px;width:1px;height:352px;background:#d4d4d4"></div>
<div class="a" style="left:1355px;top:148px;width:1px;height:352px;background:#d4d4d4"></div>
<svg class="a" style="left:0;top:0" width="1366" height="728" viewBox="0 0 1366 728"><path d="M889 323.5L889.00 158.30A165.2 165.2 0 0 1 920.80 161.39Z" fill="#1f77b4"/><path d="M889 323.5L920.80 161.39A165.2 165.2 0 0 1 963.74 176.18Z" fill="#aec7e8"/><path d="M889 323.5L963.74 176.18A165.2 165.2 0 0 1 1037.61 251.34Z" fill="#ff7f0e"/><path d="M889 323.5L1037.61 251.34A165.2 165.2 0 0 1 1052.86 344.49Z" fill="#ffbb78"/><path d="M889 323.5L1052.86 344.49A165.2 165.2 0 0 1 962.45 471.47Z" fill="#2ca02c"/><path d="M889 323.5L962.45 471.47A165.2 165.2 0 0 1 872.59 487.88Z" fill="#98df8a"/><path d="M889 323.5L872.59 487.88A165.2 165.2 0 0 1 782.15 449.49Z" fill="#d62728"/><path d="M889 323.5L782.15 449.49A165.2 165.2 0 0 1 736.26 386.45Z" fill="#ff9896"/><path d="M889 323.5L736.26 386.45A165.2 165.2 0 0 1 724.93 304.23Z" fill="#9467bd"/><path d="M889 323.5L724.93 304.23A165.2 165.2 0 0 1 735.08 263.49Z" fill="#c5b0d5"/><path d="M889 323.5L735.08 263.49A165.2 165.2 0 0 1 814.52 176.04Z" fill="#8c564b"/><path d="M889 323.5L814.52 176.04A165.2 165.2 0 0 1 857.76 161.28Z" fill="#c49c94"/><path d="M889 323.5L857.76 161.28A165.2 165.2 0 0 1 889.00 158.30Z" fill="#e377c2"/><circle cx="889.600" cy="324" r="84" fill="#fff"/><text x="865.800" y="328" font-family="Liberation Sans, sans-serif" font-weight="bold" font-size="14" textLength="45.500" lengthAdjust="spacingAndGlyphs" fill="#000">819,811</text></svg>
<div class="a" style="left:203px;top:679px;width:1163px;height:30px;background:#f0f0f0"></div>
<div class="a" style="left:203px;top:679px;width:1163px;height:1px;background:#a6a6a6"></div>
<div class="a" style="left:205px;top:679px;width:71px;height:27px;background:#f0f0f0;border:1px solid #a9a9a9;border-top:none;border-radius:0 0 6px 6px"></div>
<div class="a" style="left:279px;top:678px;width:71px;height:28px;background:#fff;border:1px solid #a9a9a9;border-top:none;border-radius:0 0 6px 6px"></div>
<div class="a" style="left:353px;top:679px;width:113px;height:27px;background:#f0f0f0;border:1px solid #a9a9a9;border-top:none;border-radius:0 0 6px 6px"></div>
<div class="a" style="left:473px;top:679px;width:32px;height:27px;background:#e4e4e4;border:1px solid #a9a9a9;border-top:none;border-radius:0 0 6px 6px"></div>
<div class="a" style="left:508px;top:679px;width:32px;height:27px;background:#e4e4e4;border:1px solid #a9a9a9;border-top:none;border-radius:0 0 6px 6px"></div>
<div class="a" style="left:205px;top:679px;width:71px;height:1px;background:#a6a6a6"></div>
<div class="a" style="left:353px;top:679px;width:113px;height:1px;background:#a6a6a6"></div>
<div class="a" style="left:473px;top:679px;width:32px;height:1px;background:#a6a6a6"></div>
<div class="a" style="left:508px;top:679px;width:32px;height:1px;background:#a6a6a6"></div>
<div class="t" style="left:220px;top:685px;font-size:12px;letter-spacing:-.55px">Sheet 1</div>
<div class="t" style="left:291.500px;top:685px;font-size:12px;font-weight:bold">Sheet 2</div>
<svg class="a" style="left:364px;top:688px" width="13" height="10" viewBox="0 0 13 10" fill="#fff" stroke="#5a6472" stroke-width="1"><rect x=".5" y=".5" width="11.500" height="8.500"/><path d="M6.200 .5v8.500M.5 4.700h11.500"/></svg>
<div class="t" style="left:384.500px;top:685px;font-size:12px;letter-spacing:-.33px">Dashboard 1</div>
<svg class="a" style="left:480px;top:684px" width="18" height="15" viewBox="0 0 18 15"><rect x="1.700" y="3.700" width="13.600" height="9.600" fill="#fff" stroke="#4e5a70" stroke-width="1.400"/><rect x="4.300" y="7.500" width="2.200" height="6" fill="#4e5a70"/><rect x="7.800" y="5.500" width="2.200" height="8" fill="#4e5a70"/><rect x="11.200" y="6.500" width="2.200" height="7" fill="#4e5a70"/><rect x="0" y="0" width="7.500" height="7.500" fill="#e4e4e4"/><path d="M.7 4h6.200M3.800 1v6.200" stroke="#2f62b4" stroke-width="1.800"/></svg>
<svg class="a" style="left:515px;top:684px" width="18" height="15" viewBox="0 0 18 15"><rect x="1.900" y="3.700" width="13.600" height="9.600" fill="#fff" stroke="#4e5a70" stroke-width="1.400"/><path d="M8.700 3.700v9.600M1.900 8.500h13.600" stroke="#4e5a70" stroke-width="1.400"/><rect x="0" y="0" width="7.500" height="7.500" fill="#e4e4e4"/><path d="M.7 4h6.200M3.800 1v6.200" stroke="#2f62b4" stroke-width="1.800"/></svg>
<div class="a" style="left:0;top:709px;width:1366px;height:19px;background:#f0f0f0;border-top:1px solid #fff"></div>
<div class="a" style="left:0;top:710px;width:1366px;height:1px;background:#929292"></div>
<div class="a" style="left:0;top:711px;width:1366px;height:1px;background:#f8f8f8"></div>
<div class="t" style="left:3px;top:712px;font-size:11.800px;letter-spacing:-.25px">8496 marks</div>
<div class="t" style="left:83px;top:712px;font-size:11.800px;letter-spacing:.26px">1 row by 1 column</div>
<div class="t" style="left:203px;top:712px;font-size:11.800px;letter-spacing:-.3px">SUM(one): 8,496</div>
<div class="a" style="left:1172px;top:712px;width:1px;height:16px;background:#cdcdcd"></div>
<div class="a" style="left:1199px;top:712px;width:1px;height:16px;background:#cdcdcd"></div>
<div class="a" style="left:1226px;top:712px;width:1px;height:16px;background:#cdcdcd"></div>
<div class="a" style="left:1273px;top:712px;width:1px;height:16px;background:#cdcdcd"></div>
<div class="a" style="left:1344px;top:712px;width:1px;height:16px;background:#cdcdcd"></div>
<svg class="a" style="left:1278px;top:713px" width="84" height="13" viewBox="0 0 84 13"><g fill="#a8a8a8"><rect x="4" y="2.500" width="1.300" height="8"/><path d="M10.700 2.500v8L5.800 6.500z"/><path d="M26 2.500v8l-5.300-4z"/><path d="M36.500 2.500v8l5.300-4z"/><path d="M51.700 2.500v8l4.900-4z"/><rect x="57.200" y="2.500" width="1.300" height="8"/></g><path d="M74.700 6l2.800-3.300 2.800 3.300zM74.700 7.200h5.600l-2.800 3.200z" fill="#3a4a68"/></svg>
<div class="a" style="left:0;top:1px;width:1px;height:74px;background:#f6f6f8"></div>
<div class="a" style="left:1227px;top:27px;width:29px;height:17px;background:#f0f0f0;border:1px solid #8c8c7a;border-bottom:none;border-radius:5px 5px 0 0"></div>
<div class="a" style="left:1259px;top:27px;width:29px;height:17px;background:#e4e9f5;border:1px solid #8c8c7a;border-bottom:none;border-radius:5px 5px 0 0"></div>
<div class="a" style="left:1291px;top:27px;width:29px;height:17px;background:#fff;border:1px solid #8c8c7a;border-bottom:none;border-radius:5px 5px 0 0"></div>
<div class="a" style="left:1323px;top:27px;width:29px;height:17px;background:#fff;border:1px solid #8c8c7a;border-bottom:none;border-radius:5px 5px 0 0"></div>
<div class="a" style="left:1259px;top:43px;width:94px;height:1px;background:#b6bccc"></div>
<svg class="a" style="left:1227px;top:27px" width="126" height="18" viewBox="0 0 126 18"><g fill="#8a8a7a"><rect x="8" y="5" width="13" height="1"/><rect x="8" y="11" width="13" height="1"/><rect x="8" y="7" width="3.400" height="3"/><rect x="12.800" y="7" width="3.400" height="3"/><rect x="17.600" y="7" width="3.400" height="3"/></g><g fill="#8892a0"><rect x="42" y="5" width="4" height="3"/><rect x="47.200" y="5" width="4" height="3"/><rect x="42" y="9.200" width="4" height="3"/><rect x="47.200" y="9.200" width="4" height="3"/></g><path d="M74.300 5v7.600c0 1 1.900 1.700 4.200 1.700s4.200-.7 4.200-1.700V5c0-1-1.900-1.700-4.200-1.700S74.300 4 74.300 5z" fill="#fff" stroke="#4a4a4a" stroke-width="1"/><path d="M74.300 5.200c0 1 1.900 1.600 4.200 1.600s4.200-.6 4.200-1.600" fill="none" stroke="#777" stroke-width=".8"/><path d="M105 8.700l6-5.700 6 5.700h-2.200v4.800h-7.600v-4.800z" fill="#ee9a4e"/><rect x="109.800" y="9.500" width="3.200" height="2.800" fill="#fff"/></svg>
<div class="a" style="left:1183px;top:50px;width:168px;height:25px;background:#dfebf7;border:1px solid #9c9c9c;border-bottom:none;border-radius:6px 6px 0 0"></div>
<svg class="a" style="left:1230px;top:56px" width="20" height="16" viewBox="0 0 20 16"><rect x="2" y="4.500" width="3.200" height="9" fill="#c89010"/><rect x="6" y="1.500" width="3.200" height="12" fill="#a83210"/><rect x="10.300" y="3.500" width="3.200" height="10" fill="#22b022"/><rect x="14.300" y="6.500" width="3" height="7" fill="#2a3cff"/><rect x="1" y="13.300" width="17" height="1" fill="#34435c"/></svg>
<div class="t" style="left:1255px;top:55px;font-size:12.500px;letter-spacing:-.35px">Show Me</div>
</body></html>
